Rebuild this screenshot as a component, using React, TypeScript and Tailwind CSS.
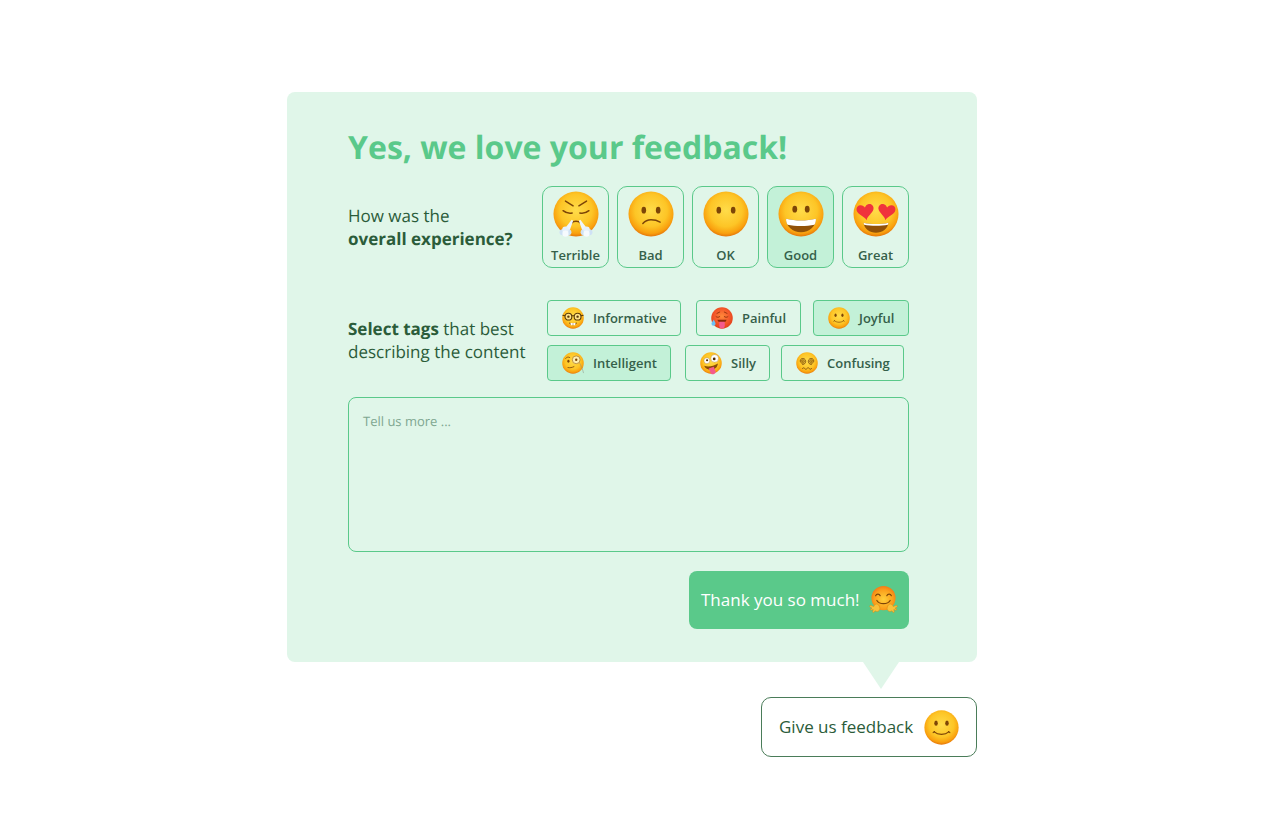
import React, { useId } from "react";

type P = { size: number; className?: string };

function Face({ size, children, hot, className }: P & { children?: React.ReactNode; hot?: boolean }) {
  const id = useId().replace(/[^a-zA-Z0-9]/g, "");
  return (
    <svg width={size} height={size} viewBox="0 0 48 48" className={`overflow-visible ${className ?? ""}`}>
      <defs>
        <radialGradient id={id} cx="50%" cy="42%" r="58%">
          {hot ? (
            <>
              <stop offset="0%" stopColor="#ff8a3a" />
              <stop offset="60%" stopColor="#f4582a" />
              <stop offset="100%" stopColor="#e0401a" />
            </>
          ) : (
            <>
              <stop offset="0%" stopColor="#ffdc4a" />
              <stop offset="62%" stopColor="#fdc526" />
              <stop offset="88%" stopColor="#f9a00e" />
              <stop offset="100%" stopColor="#e5760a" />
            </>
          )}
        </radialGradient>
      </defs>
      <circle cx="24" cy="24" r="23.500" fill={`url(#${id})`} />
      {children}
    </svg>
  );
}

const B = "#7d4507";
const Eyes = ({ y = 20 }: { y?: number }) => (
  <>
    <ellipse cx="16.500" cy={y} rx="2.400" ry="3.600" fill={B} />
    <ellipse cx="31.500" cy={y} rx="2.400" ry="3.600" fill={B} />
  </>
);
const line = { fill: "none", stroke: B, strokeLinecap: "round" as const, strokeLinejoin: "round" as const };

const Heart = ({ x, y, s, r }: { x: number; y: number; s: number; r: number }) => (
  <path
    transform={`translate(${x} ${y}) rotate(${r}) scale(${s})`}
    d="M0 7C-1.500 2-9-1-11-6c-1.500-4 1-8 5-8 3 0 5 2 6 4 1-2 3-4 6-4 4 0 6.500 4 5 8C9-1 1.500 2 0 7z"
    fill="#f0323c"
  />
);

const Cloud = ({ x, y }: { x: number; y: number }) => (
  <g>
    <circle cx={x - 3} cy={y} r="3.200" fill="#cfe2f5" />
    <circle cx={x + 3} cy={y} r="3.200" fill="#cfe2f5" />
    <circle cx={x} cy={y - 2.500} r="3.400" fill="#e6f1fb" />
    <circle cx={x} cy={y + 1.500} r="3.200" fill="#f6fafe" />
  </g>
);

const Terrible = (p: P) => (
  <Face {...p}>
    <path {...line} strokeWidth="1.500" d="M13 10.500l8 5M35 10.500l-8 5" />
    <path {...line} strokeWidth="1.500" d="M10.500 20.500c3 2.500 7 3 9.500 2.500M37.500 20.500c-3 2.500-7 3-9.500 2.500" />
    <path {...line} strokeWidth="1.500" d="M20 33c1-2 7-2 8 0" />
    <path fill="#eef5fb" d="M19.500 30l1.500 1-3.500 10H11zM28.500 30l-1.500 1 3.500 10H37z" />
    <Cloud x={13} y={43} />
    <Cloud x={35} y={43} />
  </Face>
);
const Bad = (p: P) => (
  <Face {...p}>
    <Eyes />
    <path {...line} strokeWidth="1.500" d="M15.500 34c2.500-3 5-4 8.500-4 3.500 0 7 1 9.500 2.500" />
  </Face>
);
const OK = (p: P) => (
  <Face {...p}>
    <Eyes />
  </Face>
);
const Good = (p: P) => (
  <Face {...p}>
    <ellipse cx="17.500" cy="19" rx="2.500" ry="3.500" fill={B} />
    <ellipse cx="30.500" cy="19" rx="2.500" ry="3.500" fill={B} />
    <path d="M8.500 29c10 2.500 21 2.500 31 0 .5 8-7 14-15.500 14S8 37 8.500 29z" fill="#925208" />
    <path d="M8.500 29c10 2.500 21 2.500 31 0 .3 2.500-.4 4.500-1.500 6.300-8 1.700-20 1.700-28 0C9 33.500 8.200 31.500 8.500 29z" fill="#ffffff" />
  </Face>
);
const Great = (p: P) => (
  <Face {...p}>
    <path d="M11 33c8 2 18 2 26 0-.5 6-6.500 10.500-13 10.500S11.500 39 11 33z" fill="#925208" />
    <path d="M11 33c8 2 18 2 26 0-.1 .8-.3 1.500-.6 2.200-7.500 1.500-17.300 1.500-24.800 0-.3-.7-.5-1.400-.6-2.200z" fill="#ffffff" />
    <Heart x={13.500} y={25} s={0.780} r={-8} />
    <Heart x={34.500} y={25} s={0.780} r={8} />
  </Face>
);
const Informative = (p: P) => (
  <Face {...p}>
    <g fill="#ffe48a" stroke="#5a3a08" strokeWidth="2.400">
      <circle cx="14" cy="21" r="7.500" />
      <circle cx="34" cy="21" r="7.500" />
    </g>
    <path d="M21 19h6M1 18l6 1M47 18l-6 1" stroke="#5a3a08" strokeWidth="2.400" />
    <circle cx="14" cy="21" r="2.600" fill="#5a3a08" />
    <circle cx="34" cy="21" r="2.600" fill="#5a3a08" />
    <path d="M15 34c6 1.500 12 1.500 18 0-1.500 4-5 6-9 6s-7.500-2-9-6z" fill="#7a4208" />
    <rect x="19" y="35" width="4.500" height="5" rx="0.500" fill="#fff" />
    <rect x="24.500" y="35" width="4.500" height="5" rx="0.500" fill="#fff" />
  </Face>
);
const Painful = (p: P) => (
  <Face {...p} hot>
    <path {...line} stroke="#8a2a08" strokeWidth="1.800" d="M13 14l6-3M35 14l-6-3" />
    <path {...line} stroke="#8a2a08" strokeWidth="1.800" d="M11 21c2 2 6 2 8 0M29 21c2 2 6 2 8 0" />
    <path d="M14 28h20c-1 3-3 5-5 5.500h-10c-2-.5-4-2.500-5-5.500z" fill="#8a2a08" />
    <path d="M18 32h12v9a6 6 0 0 1-12 0z" fill="#f45a8c" />
    <path d="M6 27c1.500 3.500 4 6 4 9.500a4.500 4.500 0 0 1-9 0C1 33 4.500 30.500 6 27z" fill="#6cc0f5" />
  </Face>
);
const Joyful = (p: P) => (
  <Face {...p}>
    <Eyes y={18} />
    <path {...line} strokeWidth="1.500" d="M14 30c5 4.500 15 4.500 20 0" />
    <path {...line} strokeWidth="1.500" d="M12.500 31l2-1.500M35.500 31l-2-1.500" />
  </Face>
);
const Intelligent = (p: P) => (
  <Face {...p}>
    <path {...line} strokeWidth="1.800" d="M8 14c2-3 6-4 9-2" />
    <ellipse cx="14" cy="20" rx="2.400" ry="3.200" fill={B} />
    <path {...line} strokeWidth="1.800" d="M13 34c4 1 9 0 13-2" />
    <circle cx="31" cy="17" r="8.500" fill="#fff0b0" stroke="#b88a40" strokeWidth="2" />
    <circle cx="31" cy="17" r="2.600" fill={B} />
    <path d="M38 23c3 6 7 14 9 23" fill="none" stroke="#8d8d80" strokeWidth="1.100" />
  </Face>
);
const Silly = (p: P) => (
  <Face {...p}>
    <circle cx="15" cy="19" r="6.500" fill="#fff" stroke="#a86a10" strokeWidth="0.800" />
    <circle cx="15.500" cy="18" r="2.400" fill="#4a2a06" />
    <circle cx="32" cy="14" r="8.500" fill="#fff" stroke="#a86a10" strokeWidth="0.800" />
    <circle cx="31" cy="15" r="3" fill="#4a2a06" />
    <path d="M9 30c9 3 20 1 30-5-.5 8-7 14-15 14-7 0-13-3-15-9z" fill="#8a4b08" />
    <path d="M19 36l11-4 4 10c1 3-1 5.500-4.500 6.300-3.500 .6-5.500-.6-6.500-3.300z" fill="#f45a8c" />
  </Face>
);

function spiral(cx: number, cy: number, dir: number) {
  let d = "";
  for (let i = 0; i <= 40; i++) {
    const t = (i / 40) * Math.PI * 4.5;
    const r = 0.8 + (i / 40) * 6.5;
    const x = cx + dir * r * Math.cos(t);
    const y = cy + r * Math.sin(t);
    d += `${i ? "L" : "M"}${x.toFixed(2)} ${y.toFixed(2)}`;
  }
  return d;
}
const Confusing = (p: P) => (
  <Face {...p}>
    <g {...line} stroke="#6a3a06" strokeWidth="1.700">
      <path d={spiral(14.500, 20, 1)} />
      <path d={spiral(33.500, 20, -1)} />
      <path d="M14 36c1.700-2 3.300-2 5 0s3.300 2 5 0 3.300-2 5 0 3.300 2 5 0" />
    </g>
  </Face>
);
const Hug = ({ size }: P) => (
  <svg width={size} height={size} viewBox="0 0 48 48" className="mt-px">
    <defs>
      <radialGradient id="hugface" cx="50%" cy="55%" r="60%">
        <stop offset="0%" stopColor="#ffcf3a" />
        <stop offset="65%" stopColor="#fb9f1c" />
        <stop offset="100%" stopColor="#f26f12" />
      </radialGradient>
    </defs>
    <circle cx="24" cy="20" r="20" fill="url(#hugface)" />
    <path {...line} strokeWidth="2" d="M11 16c1.500-3.500 6-3.500 7.500 0M29.500 16c1.500-3.500 6-3.500 7.500 0" />
    <path {...line} strokeWidth="2" d="M13 24c4 7 18 7 22 0" />
    <g fill="#f9c13a" stroke="#d98a10" strokeWidth="0.800">
      <path d="M14 30c-3-1-5 1-6 4l-6-2-1 2 4 3-3 1 1 2 4-1-1 4 2 1 2-3c4 3 8 0 8-4 0-3-2-6-4-7z" />
      <path d="M34 30c3-1 5 1 6 4l6-2 1 2-4 3 3 1-1 2-4-1 1 4-2 1-2-3c-4 3-8 0-8-4 0-3 2-6 4-7z" />
    </g>
  </svg>
);

const ratings: { label: string; Icon: (p: P) => React.ReactElement; on?: boolean }[] = [
  { label: "Terrible", Icon: Terrible },
  { label: "Bad", Icon: Bad },
  { label: "OK", Icon: OK },
  { label: "Good", Icon: Good, on: true },
  { label: "Great", Icon: Great },
];

function Tag({ label, Icon, on, cls }: { label: string; Icon: (p: P) => React.ReactElement; on?: boolean; cls: string }) {
  return (
    <button
      className={`h-9 flex items-center gap-[9px] pl-[14px] rounded border border-[#5ac98a] text-[13px] font-semibold text-[#35604a] ${on ? "bg-[#c3f1d8]" : ""} ${cls}`}
    >
      <Icon size={22} />
      <span className="pt-px">{label}</span>
    </button>
  );
}

export default function App() {
  return (
    <div className="min-h-[832px] bg-white pt-[92px] pl-[287px] font-['Open_Sans',sans-serif] [text-rendering:geometricPrecision] antialiased">
      <div className="w-[690px] h-[570px] rounded-lg bg-[#e0f6e9] pl-[61px] pr-[68px] pt-[34px]">
        <h1 className="text-[32px] leading-[44px] font-bold text-[#5ac98a]">Yes, we love your feedback!</h1>
        <div className="mt-[16px] flex">
          <p className="w-[194px] pt-[18px] text-[17px] leading-[23px] text-[#2b5c3a]">
            How was the
            <br />
            <b className="font-bold">overall experience?</b>
          </p>
          <div className="flex gap-2">
            {ratings.map(({ label, Icon, on }) => (
              <button
                key={label}
                className={`w-[67px] h-[82px] rounded-[10px] border border-[#5ac98a] flex flex-col items-center pt-[4px] ${on ? "bg-[#c3f1d8]" : ""}`}
              >
                <Icon size={46} />
                <span className="mt-[9px] text-[13px] leading-[18px] font-semibold text-[#35604a]">{label}</span>
              </button>
            ))}
          </div>
        </div>
        <div className="mt-[32px] flex">
          <p className="w-[199px] pt-[17px] text-[17px] leading-[23px] text-[#2b5c3a]">
            <b className="font-bold">Select tags</b> that best
            <br />
            describing the content
          </p>
          <div className="flex flex-col gap-[9px]">
            <div className="flex">
              <Tag label="Informative" Icon={Informative} cls="w-[134px]" />
              <Tag label="Painful" Icon={Painful} cls="w-[105px] ml-[15px]" />
              <Tag label="Joyful" Icon={Joyful} on cls="w-[96px] ml-[12px]" />
            </div>
            <div className="flex">
              <Tag label="Intelligent" Icon={Intelligent} on cls="w-[124px]" />
              <Tag label="Silly" Icon={Silly} cls="w-[85px] ml-[14px]" />
              <Tag label="Confusing" Icon={Confusing} cls="w-[123px] ml-[11px]" />
            </div>
          </div>
        </div>
        <div className="mt-[16px] h-[155px] rounded-lg border border-[#5ac98a] px-[14px] pt-[14px] text-[13px] leading-[18px] text-[#7fa791]">
          Tell us more ...
        </div>
        <div className="mt-[19px] flex justify-end">
          <button className="w-[220px] h-[58px] rounded-lg bg-[#5ac98a] flex items-center pl-[12px] gap-[9px] text-[17px] text-white">
            <span>Thank you so much!</span>
            <Hug size={29} />
          </button>
        </div>
      </div>
      <div className="w-[690px] flex flex-col items-end">
        <svg width="36" height="27" viewBox="0 0 36 27" className="mr-[78px]">
          <path d="M0 0h36L18 27z" fill="#e0f6e9" />
        </svg>
        <button className="mt-[8px] w-[216px] h-[60px] rounded-[10px] border border-[#4a7c59] bg-white flex items-center pl-[17px] gap-[11px] text-[17px] text-[#2b5c3a]">
          Give us feedback
          <Joyful size={35} />
        </button>
      </div>
    </div>
  );
}
